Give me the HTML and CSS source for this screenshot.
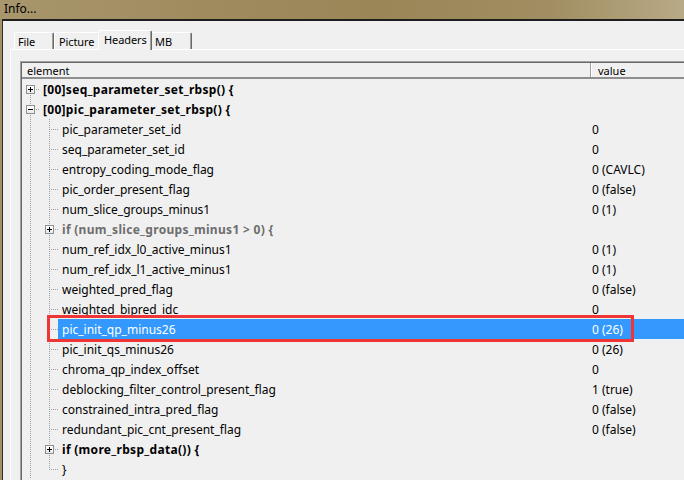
FILE: index.html
```html
<!DOCTYPE html>
<html>
<head>
<meta charset="utf-8">
<title>Info...</title>
<link rel="stylesheet" href="styles.css">
</head>
<body>
<div class="titlebar">Info...</div>
<div class="frame">
  <div class="client">
    <div class="tabs">
      <div class="tab t-file">File</div>
      <div class="tab t-pic">Picture</div>
      <div class="tab t-hdr sel">Headers</div>
      <div class="tab t-mb">MB</div>
    </div>
    <div class="pane">
      <div class="list">
        <div class="list-in">
          <div class="lv-head">
            <div class="h-el">element</div>
            <div class="h-val">value</div>
          </div>
          <div class="lv-body">
            <div class="row"><div class="g1 root first"><span class="box plus"></span></div><div class="t b">[00]seq_parameter_set_rbsp() {</div><div class="v"></div></div>
            <div class="row"><div class="g1 root"><span class="box minus"></span></div><div class="t b">[00]pic_parameter_set_rbsp() {</div><div class="v"></div></div>
            <div class="row"><div class="g1 full"></div><div class="g2 mid"></div><div class="t">pic_parameter_set_id</div><div class="v">0</div></div>
            <div class="row"><div class="g1 full"></div><div class="g2 mid"></div><div class="t">seq_parameter_set_id</div><div class="v">0</div></div>
            <div class="row"><div class="g1 full"></div><div class="g2 mid"></div><div class="t">entropy_coding_mode_flag</div><div class="v">0 (CAVLC)</div></div>
            <div class="row"><div class="g1 full"></div><div class="g2 mid"></div><div class="t">pic_order_present_flag</div><div class="v">0 (false)</div></div>
            <div class="row"><div class="g1 full"></div><div class="g2 mid"></div><div class="t">num_slice_groups_minus1</div><div class="v">0 (1)</div></div>
            <div class="row"><div class="g1 full"></div><div class="g2 mid"><span class="box plus"></span></div><div class="t b gray">if (num_slice_groups_minus1 &gt; 0) {</div><div class="v"></div></div>
            <div class="row"><div class="g1 full"></div><div class="g2 mid"></div><div class="t">num_ref_idx_l0_active_minus1</div><div class="v">0 (1)</div></div>
            <div class="row"><div class="g1 full"></div><div class="g2 mid"></div><div class="t">num_ref_idx_l1_active_minus1</div><div class="v">0 (1)</div></div>
            <div class="row"><div class="g1 full"></div><div class="g2 mid"></div><div class="t">weighted_pred_flag</div><div class="v">0 (false)</div></div>
            <div class="row"><div class="g1 full"></div><div class="g2 mid"></div><div class="t">weighted_bipred_idc</div><div class="v">0</div></div>
            <div class="row sel"><div class="g1 full"></div><div class="g2 mid"></div><div class="t">pic_init_qp_minus26</div><div class="v">0 (26)</div></div>
            <div class="row"><div class="g1 full"></div><div class="g2 mid"></div><div class="t">pic_init_qs_minus26</div><div class="v">0 (26)</div></div>
            <div class="row"><div class="g1 full"></div><div class="g2 mid"></div><div class="t">chroma_qp_index_offset</div><div class="v">0</div></div>
            <div class="row"><div class="g1 full"></div><div class="g2 mid"></div><div class="t">deblocking_filter_control_present_flag</div><div class="v">1 (true)</div></div>
            <div class="row"><div class="g1 full"></div><div class="g2 mid"></div><div class="t">constrained_intra_pred_flag</div><div class="v">0 (false)</div></div>
            <div class="row"><div class="g1 full"></div><div class="g2 mid"></div><div class="t">redundant_pic_cnt_present_flag</div><div class="v">0 (false)</div></div>
            <div class="row"><div class="g1 full"></div><div class="g2 mid"><span class="box plus"></span></div><div class="t b">if (more_rbsp_data()) {</div><div class="v"></div></div>
            <div class="row"><div class="g1 full"></div><div class="g2 last"></div><div class="t">}</div><div class="v"></div></div>
          </div>
        </div>
      </div>
    </div>
  </div>
</div>
<div class="annot"></div>
</body>
</html>
```
FILE: styles.css
```css
* { box-sizing: border-box; }
html, body { margin: 0; padding: 0; }
body {
  width: 684px;
  height: 480px;
  overflow: hidden;
  position: relative;
  background: #a59166;
  font-family: "Noto Sans", sans-serif;
  display: flex;
  flex-direction: column;
}
.titlebar {
  height: 19px;
  flex: none;
  background: linear-gradient(90deg, #a8966c 0%, #9f8b5e 30%, #9a8657 55%, #a08d61 80%, #b8aa86 100%);
  font-size: 12px;
  line-height: 17px;
  padding-left: 4px;
  color: #000;
}
.frame {
  flex: 1;
  display: flex;
  padding-left: 2px;
  min-height: 0;
}
.client {
  flex: 1;
  display: flex;
  flex-direction: column;
  background: #f0f0f0;
  border-top: 2px solid #1e1e1e;
  border-left: 1px solid #2e2e2e;
  padding: 9px 0 0 7px;
  min-height: 0;
}
.tabs {
  display: flex;
  align-items: flex-end;
  height: 19px;
  flex: none;
  padding-left: 4px;
}
.tab {
  height: 17px;
  background: #f0f0f0;
  border-top: 1px solid #fff;
  border-left: 1px solid #fff;
  border-right: 1px solid #696969;
  box-shadow: inset -1px 0 #a0a0a0;
  border-radius: 2px 2px 0 0;
  font-size: 11px;
  line-height: 13px;
  letter-spacing: -0.1px;
  padding: 2px 0 0 3px;
  color: #000;
  white-space: nowrap;
}
.t-file { width: 40px; }
.t-pic { width: 46px; padding-left: 4px; }
.t-mb { width: 42px; padding-left: 4px; }
.tab.sel {
  width: 54px;
  height: 20px;
  margin: 0 -2px -1px;
  padding-left: 5px;
  position: relative;
  z-index: 2;
}
.pane {
  flex: 1;
  display: flex;
  flex-direction: column;
  border-top: 1px solid #fff;
  border-left: 1px solid #fff;
  padding: 11px 0 0 9px;
  min-height: 0;
}
.list {
  flex: 1;
  display: flex;
  border-top: 1px solid #a0a0a0;
  border-left: 1px solid #a0a0a0;
  min-height: 0;
}
.list-in {
  flex: 1;
  border-top: 1px solid #696969;
  border-left: 1px solid #696969;
  display: flex;
  flex-direction: column;
  overflow: hidden;
}
.lv-head {
  display: flex;
  height: 16px;
  flex: none;
  border-bottom: 2px solid #8e8e8e;
  font-size: 11px;
  line-height: 12px;
  color: #000;
}
.h-el {
  flex: 1;
  padding: 2px 0 0 5px;
  border-right: 1px solid #a0a0a0;
}
.h-val {
  width: 93px;
  flex: none;
  padding: 2px 0 0 6px;
  border-left: 1px solid #fff;
}
.lv-body {
  display: flex;
  flex-direction: column;
}
.row {
  display: flex;
  height: 20px;
  flex: none;
  font-size: 12px;
  line-height: 22px;
  color: #000;
}
.g1 {
  width: 17px;
  flex: none;
  display: flex;
  align-items: center;
}
.g2 {
  width: 19px;
  flex: none;
  display: flex;
  align-items: center;
}
.g1.full {
  background: repeating-linear-gradient(to bottom, #a0a0a0 0 1px, transparent 1px 2px) 8px 0 / 1px 20px no-repeat;
}
.g1.root {
  background:
    repeating-linear-gradient(to right, #a0a0a0 0 1px, transparent 1px 2px) 8px 10px / 9px 1px no-repeat,
    repeating-linear-gradient(to bottom, #a0a0a0 0 1px, transparent 1px 2px) 8px 0 / 1px 20px no-repeat;
}
.g1.root.first {
  background:
    repeating-linear-gradient(to right, #a0a0a0 0 1px, transparent 1px 2px) 8px 10px / 9px 1px no-repeat,
    repeating-linear-gradient(to bottom, #a0a0a0 0 1px, transparent 1px 2px) 8px 10px / 1px 10px no-repeat;
}
.g2.mid {
  background:
    repeating-linear-gradient(to right, #a0a0a0 0 1px, transparent 1px 2px) 10px 10px / 9px 1px no-repeat,
    repeating-linear-gradient(to bottom, #a0a0a0 0 1px, transparent 1px 2px) 10px 0 / 1px 20px no-repeat;
}
.g2.last {
  background:
    repeating-linear-gradient(to right, #a0a0a0 0 1px, transparent 1px 2px) 10px 10px / 9px 1px no-repeat,
    repeating-linear-gradient(to bottom, #a0a0a0 0 1px, transparent 1px 2px) 10px 0 / 1px 11px no-repeat;
}
.box {
  width: 9px;
  height: 9px;
  flex: none;
  border: 1px solid #8f8f8f;
  background-color: #fff;
}
.g1 .box { margin-left: 4px; }
.g2 .box { margin-left: 6px; }
.box.plus {
  background:
    linear-gradient(#000, #000) 1px 3px / 5px 1px no-repeat,
    linear-gradient(#000, #000) 3px 1px / 1px 5px no-repeat,
    linear-gradient(#ffffff, #e8e8e8);
}
.box.minus {
  background:
    linear-gradient(#000, #000) 1px 3px / 5px 1px no-repeat,
    linear-gradient(#ffffff, #e8e8e8);
}
.t {
  flex: 1;
  padding-left: 4px;
  white-space: nowrap;
  overflow: hidden;
}
.t.b { font-weight: bold; letter-spacing: 0.3px; }
.t.gray { color: #6d6d6d; }
.v {
  width: 93px;
  flex: none;
  padding-left: 1px;
  white-space: nowrap;
  overflow: hidden;
}
.row.sel .t, .row.sel .v {
  background: #3399ff;
  color: #fff;
}
.annot {
  position: absolute;
  left: 47px;
  top: 315px;
  width: 587px;
  height: 27px;
  border: 3px solid #ee3636;
}
```
